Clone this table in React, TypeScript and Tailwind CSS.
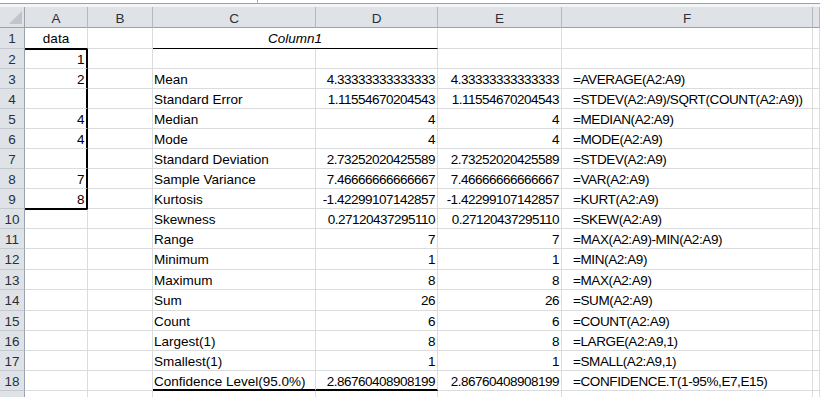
import React from "react";

type Side = "grid" | "black" | "thick" | "none";

interface CellSpec {
  text?: string;
  kind?: "label" | "num" | "formula" | "center" | "title";
  right?: Side;
  bottom?: Side;
  top?: Side;
  span?: boolean;
}

const RIGHT: Record<Side, string> = {
  grid: "border-r border-r-[#dadcdd]",
  black: "border-r border-r-black",
  thick: "border-r-2 border-r-black",
  none: "",
};

const BOTTOM: Record<Side, string> = {
  grid: "border-b border-b-[#dadcdd]",
  black: "border-b border-b-black",
  thick: "border-b-2 border-b-black",
  none: "",
};

const KIND: Record<string, string> = {
  label: "text-left pl-[1px]",
  num: "text-right pr-[2px] tracking-[-0.5px]",
  formula: "text-left pl-[11px] tracking-[-0.4px]",
  center: "text-center",
  title: "text-center italic",
};

function Cell({ spec }: { spec: CellSpec }) {
  const right = RIGHT[spec.right ?? "grid"];
  const bottom = BOTTOM[spec.bottom ?? "grid"];
  const top = spec.top === "black" ? "border-t border-t-black pt-[2px]" : "pt-[3px]";
  const kind = KIND[spec.kind ?? "label"];
  const span = spec.span ? "col-span-2" : "";
  return (
    <div
      className={`${right} ${bottom} ${top} ${kind} ${span} bg-white leading-[16px] whitespace-nowrap text-black`}
    >
      {spec.text ?? ""}
    </div>
  );
}

const STATS: [string, string, string][] = [
  ["Mean", "4.33333333333333", "=AVERAGE(A2:A9)"],
  ["Standard Error", "1.11554670204543", "=STDEV(A2:A9)/SQRT(COUNT(A2:A9))"],
  ["Median", "4", "=MEDIAN(A2:A9)"],
  ["Mode", "4", "=MODE(A2:A9)"],
  ["Standard Deviation", "2.73252020425589", "=STDEV(A2:A9)"],
  ["Sample Variance", "7.46666666666667", "=VAR(A2:A9)"],
  ["Kurtosis", "-1.42299107142857", "=KURT(A2:A9)"],
  ["Skewness", "0.27120437295110", "=SKEW(A2:A9)"],
  ["Range", "7", "=MAX(A2:A9)-MIN(A2:A9)"],
  ["Minimum", "1", "=MIN(A2:A9)"],
  ["Maximum", "8", "=MAX(A2:A9)"],
  ["Sum", "26", "=SUM(A2:A9)"],
  ["Count", "6", "=COUNT(A2:A9)"],
  ["Largest(1)", "8", "=LARGE(A2:A9,1)"],
  ["Smallest(1)", "1", "=SMALL(A2:A9,1)"],
  ["Confidence Level(95.0%)", "2.86760408908199", "=CONFIDENCE.T(1-95%,E7,E15)"],
];

const DATA_A: Record<number, string> = { 2: "1", 3: "2", 5: "4", 6: "4", 8: "7", 9: "8" };

function buildRow(r: number): CellSpec[] {
  const inBox = r >= 2 && r <= 9;
  const a: CellSpec = {
    text: r === 1 ? "data" : DATA_A[r],
    kind: r === 1 ? "center" : "num",
    right: inBox ? "thick" : "grid",
    bottom: r === 1 || r === 9 ? "black" : "grid",
    top: r === 2 || r === 10 ? "black" : "none",
  };
  const b: CellSpec = {};
  if (r === 1) {
    return [a, b, { text: "Column1", kind: "title", span: true, bottom: "black" }, {}, {}, {}];
  }
  const stat = STATS[r - 3];
  if (!stat) return [a, b, {}, {}, {}, {}, {}];
  const last = r === 18;
  return [
    a,
    b,
    { text: stat[0], kind: "label", bottom: last ? "thick" : "grid" },
    { text: stat[1], kind: "num", bottom: last ? "thick" : "grid" },
    { text: stat[1], kind: "num" },
    { text: stat[2], kind: "formula" },
    {},
  ];
}

const COLS = ["A", "B", "C", "D", "E", "F", ""];

export default function App() {
  const rows = Array.from({ length: 19 }, (_, i) => i + 1);
  return (
    <div className="w-[820px] h-[397px] overflow-hidden bg-white font-['Liberation_Sans',Arial,sans-serif] text-[13.5px]">
      {/* strip under the formula bar */}
      <div className="flex h-[3px]">
        <div className="w-[257px]" />
        <div className="w-px bg-[#a9b0b9]" />
      </div>
      <div className="h-px bg-[#9aa2ac]" />
      <div className="h-[3px] bg-[#f2f4f6]" />

      <div className="grid grid-cols-[25px_63px_65px_163px_122px_124px_251px_1fr] grid-rows-[21px_21px_repeat(10,20px)_21px_20px_21px] auto-rows-[20px]">
        {/* select-all corner */}
        <div className="bg-[#dfe3e8] border-r border-r-[#9aa2ac] border-b border-b-[#9aa2ac] flex items-end justify-end pr-[1px] pb-[3px]">
          <svg width="14" height="13" viewBox="0 0 14 13">
            <polygon points="13,0 13,13 0,13" fill="#c0c5cc" />
          </svg>
        </div>
        {COLS.map((c, i) => (
          <div
            key={i}
            className="bg-[#dfe3e8] border-r border-r-[#b3b9c1] border-b border-b-[#9aa2ac] pt-[4px] leading-[15px] text-center text-[#2b2f36]"
          >
            {c}
          </div>
        ))}

        {rows.map((r) => (
          <React.Fragment key={r}>
            <div className="bg-[#dfe3e8] border-r border-r-[#9aa2ac] border-b border-b-[#c4c9d0] pt-[3px] leading-[16px] text-center text-[#2b2f36]">
              {r === 19 ? "" : r}
            </div>
            {buildRow(r).map((spec, i) => (
              <Cell key={i} spec={spec} />
            ))}
          </React.Fragment>
        ))}
      </div>
    </div>
  );
}
